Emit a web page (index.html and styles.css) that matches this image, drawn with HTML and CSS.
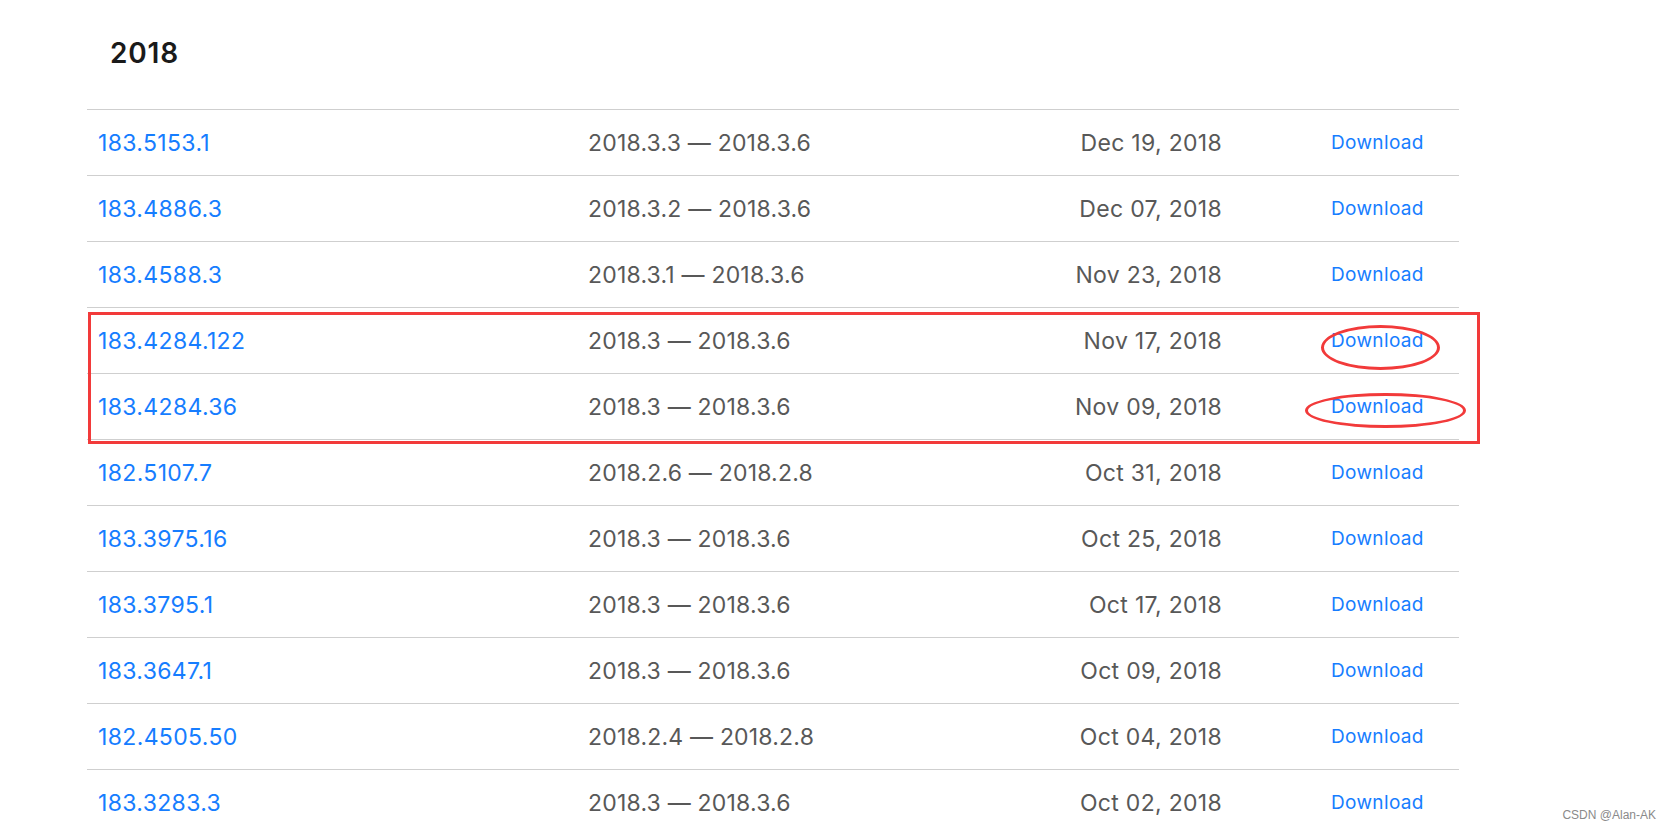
FILE: index.html
```html
<!DOCTYPE html>
<html lang="en">
<head>
<meta charset="utf-8">
<title>2018 builds</title>
<link rel="stylesheet" href="styles.css">
</head>
<body>
<main class="page">
  <h2 class="year">2018</h2>
  <div class="table">
    <div class="row"><a class="build">183.5153.1</a><span class="range">2018.3.3 — 2018.3.6</span><span class="date">Dec 19, 2018</span><a class="dl">Download</a></div>
    <div class="row"><a class="build">183.4886.3</a><span class="range">2018.3.2 — 2018.3.6</span><span class="date">Dec 07, 2018</span><a class="dl">Download</a></div>
    <div class="row"><a class="build">183.4588.3</a><span class="range">2018.3.1 — 2018.3.6</span><span class="date">Nov 23, 2018</span><a class="dl">Download</a></div>
    <div class="row"><a class="build">183.4284.122</a><span class="range">2018.3 — 2018.3.6</span><span class="date">Nov 17, 2018</span><a class="dl">Download</a></div>
    <div class="row"><a class="build">183.4284.36</a><span class="range">2018.3 — 2018.3.6</span><span class="date">Nov 09, 2018</span><a class="dl">Download</a></div>
    <div class="row"><a class="build">182.5107.7</a><span class="range">2018.2.6 — 2018.2.8</span><span class="date">Oct 31, 2018</span><a class="dl">Download</a></div>
    <div class="row"><a class="build">183.3975.16</a><span class="range">2018.3 — 2018.3.6</span><span class="date">Oct 25, 2018</span><a class="dl">Download</a></div>
    <div class="row"><a class="build">183.3795.1</a><span class="range">2018.3 — 2018.3.6</span><span class="date">Oct 17, 2018</span><a class="dl">Download</a></div>
    <div class="row"><a class="build">183.3647.1</a><span class="range">2018.3 — 2018.3.6</span><span class="date">Oct 09, 2018</span><a class="dl">Download</a></div>
    <div class="row"><a class="build">182.4505.50</a><span class="range">2018.2.4 — 2018.2.8</span><span class="date">Oct 04, 2018</span><a class="dl">Download</a></div>
    <div class="row"><a class="build">183.3283.3</a><span class="range">2018.3 — 2018.3.6</span><span class="date">Oct 02, 2018</span><a class="dl">Download</a></div>
  </div>
</main>
<div class="mark-box"></div>
<div class="mark-ellipse e1"></div>
<div class="mark-ellipse e2"></div>
<div class="watermark">CSDN @Alan-AK</div>
</body>
</html>
```

FILE: styles.css
```css
html, body {
  margin: 0;
  padding: 0;
  background: #ffffff;
  overflow: hidden;
  height: 832px;
}
body {
  position: relative;
  font-family: Inter, "Noto Sans", "Liberation Sans", sans-serif;
}
.page {
  padding-left: 87px;
  width: 1372px;
}
.year {
  margin: 0;
  padding-top: 36px;
  padding-left: 23px;
  font-size: 28px;
  line-height: 34px;
  font-weight: 600;
  letter-spacing: 0.8px;
  color: #1a1a1a;
  height: 109px;
  box-sizing: border-box;
}
.table {
  display: flex;
  flex-direction: column;
}
.row {
  display: grid;
  grid-template-columns: 501px 400px 234px 1fr;
  align-items: center;
  height: 66px;
  box-sizing: border-box;
  border-top: 1px solid #cfcfcf;
}
.build {
  padding-left: 11px;
  font-size: 23px;
  letter-spacing: 0.35px;
  color: #167dff;
}
.range {
  font-size: 23px;
  letter-spacing: 0.2px;
  color: #585858;
}
.date {
  font-size: 23px;
  letter-spacing: 0.3px;
  color: #585858;
  text-align: right;
}
.dl {
  padding-left: 109px;
  font-size: 19px;
  letter-spacing: 0.35px;
  color: #167dff;
}
.mark-box {
  position: absolute;
  left: 88px;
  top: 312px;
  width: 1392px;
  height: 132px;
  box-sizing: border-box;
  border: 3px solid #f23a3a;
}
.mark-ellipse {
  position: absolute;
  box-sizing: border-box;
  border: 3px solid #f23a3a;
  border-radius: 50%;
}
.e1 {
  left: 1321px;
  top: 325px;
  width: 119px;
  height: 45px;
}
.e2 {
  left: 1305px;
  top: 393px;
  width: 161px;
  height: 35px;
}
.watermark {
  position: absolute;
  right: 16px;
  bottom: 10px;
  font-family: "Liberation Sans", Arial, sans-serif;
  font-size: 12px;
  color: #8a8a8a;
}
```
